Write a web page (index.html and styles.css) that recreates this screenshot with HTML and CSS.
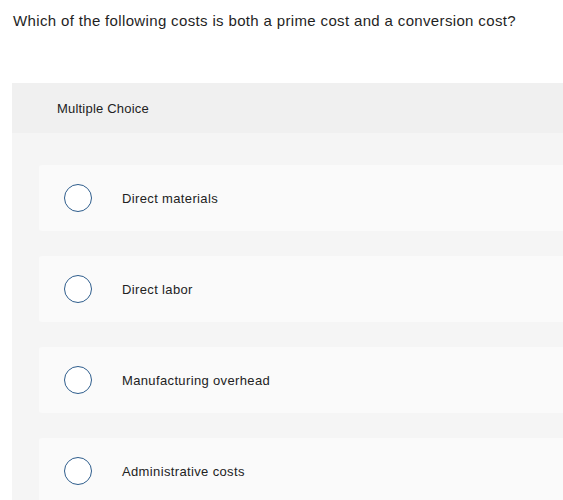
FILE: index.html
```html
<!DOCTYPE html>
<html>
<head>
<meta charset="utf-8">
<link rel="stylesheet" href="styles.css">
</head>
<body>
<p class="question">Which of the following costs is both a prime cost and a conversion cost?</p>
<section class="mc">
  <div class="mc-header">Multiple Choice</div>
  <div class="mc-body">
    <div class="option"><span class="radio"></span><span class="label">Direct materials</span></div>
    <div class="option"><span class="radio"></span><span class="label">Direct labor</span></div>
    <div class="option"><span class="radio"></span><span class="label">Manufacturing overhead</span></div>
    <div class="option"><span class="radio"></span><span class="label">Administrative costs</span></div>
  </div>
</section>
</body>
</html>
```
FILE: styles.css
```css
html, body {
  margin: 0;
  padding: 0;
  overflow: hidden;
  background: #ffffff;
}
body {
  font-family: "Liberation Sans", Arial, sans-serif;
  color: #222222;
}
.question {
  margin: 0;
  padding: 11px 0 0 13px;
  font-size: 15px;
  line-height: 20px;
  letter-spacing: 0.35px;
  color: #1f1f1f;
}
.mc {
  margin: 52px 0 0 12px;
  width: 620px;
}
.mc-header {
  background: #f0f0f0;
  height: 50px;
  display: flex;
  align-items: center;
  padding-left: 45px;
  font-size: 13px;
  letter-spacing: 0.2px;
  color: #222;
}
.mc-body {
  background: #f5f5f5;
  padding: 32px 0 40px 27px;
  display: flex;
  flex-direction: column;
  gap: 25px;
}
.option {
  background: #fafafa;
  border-radius: 3px;
  height: 66px;
  display: flex;
  align-items: center;
  padding-left: 25px;
}
.radio {
  box-sizing: border-box;
  width: 28px;
  height: 28px;
  border-radius: 50%;
  border: 1.5px solid #2e5d8c;
  background: #ffffff;
  flex: none;
}
.label {
  margin-left: 30px;
  font-size: 13px;
  letter-spacing: 0.36px;
  color: #222;
}
```
